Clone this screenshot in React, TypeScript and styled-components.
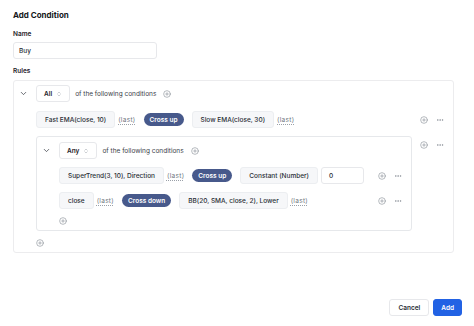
import React from "react";
import styled, { createGlobalStyle } from "styled-components";
import { ChevronDown, ChevronsUpDown, CirclePlus, Ellipsis } from "lucide-react";

const Global = createGlobalStyle`
  html, body { margin: 0; padding: 0; background: #ffffff; }
  body { font-family: Inter, "Noto Sans", sans-serif; color: #1f2329; font-size: 6.5px; }
  * { box-sizing: border-box; }
`;

type Term = { text: string; last?: boolean; value?: string };
type Cond = { type: "cond"; left: Term; op: string; right: Term };
type Group = { type: "group"; mode: string; items: (Cond | Group)[] };

const rules: Group = {
  type: "group",
  mode: "All",
  items: [
    {
      type: "cond",
      left: { text: "Fast EMA(close, 10)", last: true },
      op: "Cross up",
      right: { text: "Slow EMA(close, 30)", last: true },
    },
    {
      type: "group",
      mode: "Any",
      items: [
        {
          type: "cond",
          left: { text: "SuperTrend(3, 10), Direction", last: true },
          op: "Cross up",
          right: { text: "Constant (Number)", value: "0" },
        },
        {
          type: "cond",
          left: { text: "close", last: true },
          op: "Cross down",
          right: { text: "BB(20, SMA, close, 2), Lower", last: true },
        },
      ],
    },
  ],
};

const Page = styled.div`
  width: 474px;
  height: 326px;
  display: flex;
  flex-direction: column;
  padding: 9px 12px 10px 13px;
`;

const Title = styled.h1`
  margin: 0;
  font-size: 8px;
  line-height: 12px;
  font-weight: 700;
  color: #15171a;
`;

const Label = styled.div`
  margin-top: 9px;
  font-size: 6.5px;
  line-height: 9px;
  font-weight: 600;
  color: #1f2329;
`;

const NameInput = styled.div`
  margin-top: 3px;
  width: 144px;
  height: 17px;
  display: flex;
  align-items: center;
  padding: 0 5px;
  border: 1px solid #e7e8eb;
  border-radius: 3px;
  background: #ffffff;
  font-weight: 500;
  color: #2a2e35;
`;

const RulesLabel = styled(Label)`
  margin-top: 8px;
  margin-bottom: 4px;
`;

const GroupBox = styled.div<{ $nested?: boolean }>`
  display: flex;
  flex-direction: column;
  gap: 8px;
  border: 1px solid ${(p) => (p.$nested ? "#e6e8eb" : "#ececee")};
  border-radius: 3px;
  padding: ${(p) => (p.$nested ? "5px 0 5px 0" : "4px 0 4px 0")};
  margin-right: ${(p) => (p.$nested ? "0" : "8px")};
  background: #ffffff;
`;

const HeaderRow = styled.div<{ $nested?: boolean }>`
  display: flex;
  align-items: center;
  height: 17px;
  margin-bottom: ${(p) => (p.$nested ? "0" : "1px")};
`;

const Toggle = styled.div`
  width: 22px;
  flex: none;
  display: flex;
  align-items: center;
  padding-left: 5px;
  color: #3a3f47;
`;

const Select = styled.div`
  height: 17px;
  display: flex;
  align-items: center;
  gap: 4px;
  padding: 0 7px;
  border: 1px solid #e7e8eb;
  border-radius: 3px;
  background: #ffffff;
  font-weight: 600;
  color: #1f2329;
  svg { color: #9aa0a8; }
`;

const HeaderText = styled.span`
  margin-left: 5px;
  margin-right: 7px;
  color: #3b4048;
`;

const IconBtn = styled.span`
  width: 8px;
  height: 8px;
  display: inline-flex;
  align-items: center;
  justify-content: center;
  color: #858b94;
`;

const ItemRow = styled.div`
  display: flex;
  align-items: flex-start;
  padding-left: 22px;
`;

const Content = styled.div`
  flex: 1;
  min-width: 0;
`;

const Actions = styled.div`
  flex: none;
  width: 41px;
  height: 17px;
  display: flex;
  align-items: center;
  gap: 8px;
  padding: 0 9px 0 8px;
`;

const AddRow = styled.div<{ $nested?: boolean }>`
  display: flex;
  align-items: center;
  height: 8px;
  padding-left: 22px;
  margin-bottom: ${(p) => (p.$nested ? "0" : "1px")};
`;

const CondLine = styled.div`
  display: flex;
  align-items: center;
  gap: 8px;
  height: 17px;
`;

const TermGroup = styled.div`
  display: flex;
  align-items: center;
  gap: 3px;
`;

const Operand = styled.div`
  height: 17px;
  display: flex;
  align-items: center;
  padding: 0 8px;
  border: 1px solid #eceef1;
  border-radius: 3px;
  background: #f6f7f9;
  font-weight: 500;
  color: #2a2e35;
  white-space: nowrap;
`;

const ValueInput = styled.div`
  width: 43px;
  height: 17px;
  display: flex;
  align-items: center;
  padding: 0 7px;
  border: 1px solid #e7e8eb;
  border-radius: 3px;
  background: #ffffff;
  font-weight: 500;
  color: #2a2e35;
`;

const Last = styled.span`
  color: #6f7680;
  text-decoration: underline dotted #9aa0a8;
  text-underline-offset: 2px;
  letter-spacing: 0.3px;
  white-space: nowrap;
`;

const OpPill = styled.span`
  height: 13px;
  display: inline-flex;
  align-items: center;
  padding: 0 6px;
  border-radius: 7px;
  background: #47598b;
  color: #ffffff;
  font-weight: 600;
  white-space: nowrap;
`;

const Footer = styled.div`
  margin-top: auto;
  display: flex;
  justify-content: flex-end;
  gap: 4px;
`;

const Button = styled.button<{ $primary?: boolean }>`
  height: 17px;
  padding: 0 ${(p) => (p.$primary ? "7px" : "8px")};
  border-radius: 3px;
  border: 1px solid ${(p) => (p.$primary ? "#2262e4" : "#e7e8eb")};
  background: ${(p) => (p.$primary ? "#2262e4" : "#ffffff")};
  color: ${(p) => (p.$primary ? "#ffffff" : "#2a2e35")};
  font-family: Inter, "Noto Sans", sans-serif;
  font-size: 6.5px;
  font-weight: 600;
`;

const Plus = () => (
  <IconBtn>
    <CirclePlus size={8} strokeWidth={1.8} />
  </IconBtn>
);

const More = () => (
  <IconBtn>
    <Ellipsis size={8} strokeWidth={2} />
  </IconBtn>
);

function TermView({ t }: { t: Term }) {
  return (
    <TermGroup>
      <Operand>{t.text}</Operand>
      {t.last && <Last>(last)</Last>}
      {t.value !== undefined && <ValueInput>{t.value}</ValueInput>}
    </TermGroup>
  );
}

function GroupView({ g, nested }: { g: Group; nested?: boolean }) {
  return (
    <GroupBox $nested={nested}>
      <HeaderRow $nested={nested}>
        <Toggle>
          <ChevronDown size={9} strokeWidth={2} />
        </Toggle>
        <Select>
          {g.mode}
          <ChevronsUpDown size={6} strokeWidth={2} />
        </Select>
        <HeaderText>of the following conditions</HeaderText>
        <Plus />
      </HeaderRow>
      {g.items.map((item, i) => (
        <ItemRow key={i}>
          <Content>
            {item.type === "cond" ? (
              <CondLine>
                <TermView t={item.left} />
                <OpPill>{item.op}</OpPill>
                <TermView t={item.right} />
              </CondLine>
            ) : (
              <GroupView g={item} nested />
            )}
          </Content>
          <Actions>
            <Plus />
            <More />
          </Actions>
        </ItemRow>
      ))}
      <AddRow $nested={nested}>
        <Plus />
      </AddRow>
    </GroupBox>
  );
}

export default function App() {
  return (
    <>
      <Global />
      <Page>
        <Title>Add Condition</Title>
        <Label>Name</Label>
        <NameInput>Buy</NameInput>
        <RulesLabel>Rules</RulesLabel>
        <GroupView g={rules} />
        <Footer>
          <Button>Cancel</Button>
          <Button $primary>Add</Button>
        </Footer>
      </Page>
    </>
  );
}
